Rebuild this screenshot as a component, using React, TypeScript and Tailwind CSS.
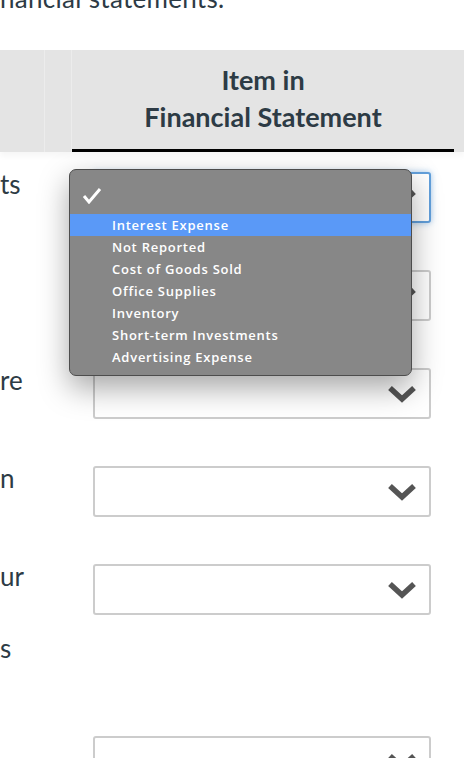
import React from "react";

const options = [
    "Interest Expense",
    "Not Reported",
    "Cost of Goods Sold",
    "Office Supplies",
    "Inventory",
    "Short-term Investments",
    "Advertising Expense",
];

function Chevron() {
    return (
        <svg width="30" height="20" viewBox="0 0 30 20" className="shrink-0">
            <polyline
                points="3,4 15,15 27,4"
                fill="none"
                stroke="#555555"
                strokeWidth="5.5"
                strokeLinejoin="miter"
            />
        </svg>
    );
}

function SelectBox({ focused }: { focused?: boolean }) {
    return (
        <div
            className={
                focused
                    ? "flex h-[51px] w-[338px] items-start justify-end rounded-[3px] border-2 border-[#62a0dc] bg-white pt-[14px] pr-[12px] shadow-[0_0_6px_rgba(98,160,220,0.6)]"
                    : "flex h-[51px] w-[338px] items-start justify-end rounded-[3px] border-2 border-[#cccccc] bg-white pt-[14px] pr-[12px]"
            }
        >
            <Chevron />
        </div>
    );
}

function Row({
    lines,
    height,
    focused,
}: {
    lines: string[];
    height: string;
    focused?: boolean;
}) {
    return (
        <div className={`flex ${height}`}>
            <div className="w-[72px] shrink-0 overflow-hidden pt-[14px] text-[26px] leading-[36px] text-[#2d3b45]">
                {lines.map((l, i) => (
                    <div key={i} className="h-[36px] whitespace-nowrap">
                        {l}
                    </div>
                ))}
            </div>
            <div className="w-[382px] pt-[20px] pl-[21px]">
                <SelectBox focused={focused} />
            </div>
        </div>
    );
}

function App() {
    return (
        <div className="relative h-[758px] w-[464px] overflow-hidden bg-white font-['Lato',sans-serif]">
            <div className="h-[50px] overflow-hidden">
                <p className="-mt-[17px] whitespace-nowrap text-[26px] leading-[30px] tracking-[0.3px] text-[#2d3b45]">
                    nancial statements.
                </p>
            </div>

            <div className="flex h-[102px] bg-[#e4e4e4] shadow-[0_4px_6px_rgba(0,0,0,0.04)]">
                <div className="w-[45px] border-r border-[#ececec]"></div>
                <div className="w-[27px] border-r border-[#ececec]"></div>
                <div className="flex w-[382px] flex-col border-b-[3px] border-black pt-[11px] text-center text-[27px] font-bold leading-[37px] text-[#2d3b45]">
                    <span>Item in</span>
                    <span>Financial Statement</span>
                </div>
            </div>

            <Row lines={["ts"]} height="h-[98px]" focused />
            <Row lines={[""]} height="h-[98px]" />
            <Row lines={["re"]} height="h-[98px]" />
            <Row lines={["n"]} height="h-[98px]" />
            <Row lines={["ur", "", "s"]} height="h-[172px]" />
            <Row lines={[""]} height="h-[98px]" />

            <div className="absolute top-[169px] left-[69px] h-[207px] w-[343px] rounded-[7px] border border-[#4d4d4d] bg-[#878787] shadow-[0_12px_30px_rgba(0,0,0,0.35)] font-['Open_Sans',sans-serif]">
                <div className="h-[44px] pt-[17px] pl-[12px]">
                    <svg width="20" height="17" viewBox="0 0 20 17">
                        <polyline
                            points="2,9 7,15 18,2"
                            fill="none"
                            stroke="white"
                            strokeWidth="3"
                        />
                    </svg>
                </div>
                <ul>
                    {options.map((o, i) => (
                        <li
                            key={o}
                            className={
                                i === 0
                                    ? "h-[22px] bg-[#5a99f7] pl-[42px] text-[13px] font-semibold leading-[22px] tracking-[0.75px] text-white"
                                    : "h-[22px] pl-[42px] text-[13px] font-semibold leading-[22px] tracking-[0.75px] text-white"
                            }
                        >
                            {o}
                        </li>
                    ))}
                </ul>
            </div>
        </div>
    );
}

export default App;
